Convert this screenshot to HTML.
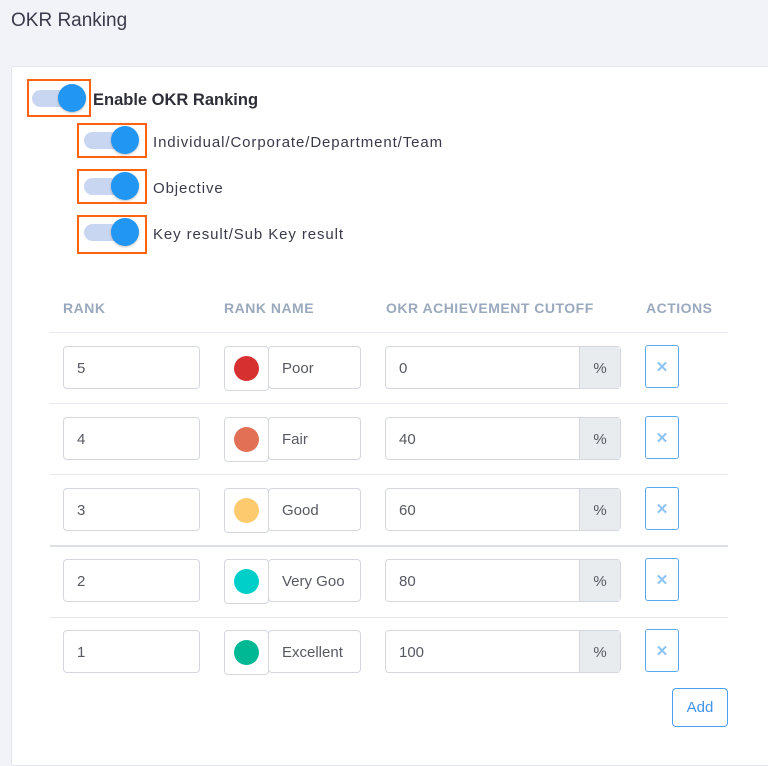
<!DOCTYPE html>
<html><head><meta charset="utf-8"><style>
*{box-sizing:border-box;margin:0;padding:0}
body{width:768px;height:744px;background:#f2f3f8;font-family:"Liberation Sans",sans-serif;position:relative;overflow:hidden;color:#3f4047}
.a{position:absolute}
.card{left:11px;top:66px;width:780px;height:700px;background:#fff;border:1px solid #e3e5ec;border-radius:3px}
.ob{border:2px solid #ff6310}
.track{position:absolute;height:17px;width:46px;border-radius:9px;background:#c9d6f1}
.knob{position:absolute;width:28px;height:28px;border-radius:50%;background:#2196f3;box-shadow:0 1px 2px rgba(0,0,0,.25)}
.lbl{font-size:15px;letter-spacing:.9px;color:#3a3a4a}
.th{font-size:14px;font-weight:bold;color:#9aa9bd;letter-spacing:.5px;top:300px}
.hr{left:50px;width:678px;height:1px;background:#e6e8ee}
.in{border:1px solid #d4d7de;border-radius:4px;background:#fff;height:43px;font-size:15px;color:#575962;padding-left:13px;line-height:43px}
.pct{background:#e9ecef;border-left:1px solid #d4d7de;position:absolute;right:0;top:0;width:41px;height:41px;text-align:center;color:#575962;line-height:43px}
.x{border:1px solid #5aa8f0;border-radius:3px;width:34px;height:43px;color:#8cc4f6;font-weight:bold;text-align:center;line-height:44px;font-size:15px}
.dot{position:absolute;left:9px;top:9px;width:25px;height:25px;border-radius:50%}
</style></head><body>
<div class="a" style="left:11px;top:10px;font-size:19px;color:#3a3a4a">OKR Ranking</div>
<div class="a card"></div>

<div class="a ob" style="left:27px;top:79px;width:64px;height:38px"></div>
<div class="track" style="left:32px;top:90px"></div><div class="knob" style="left:58px;top:84px"></div>
<div class="a" style="left:93px;top:91px;font-size:16.5px;font-weight:bold;color:#2e2e38">Enable OKR Ranking</div>

<div class="a ob" style="left:77px;top:123px;width:70px;height:35px"></div>
<div class="track" style="left:84px;top:132px"></div><div class="knob" style="left:111px;top:126px"></div>
<div class="a lbl" style="left:153px;top:134px">Individual/Corporate/Department/Team</div>

<div class="a ob" style="left:77px;top:169px;width:70px;height:35px"></div>
<div class="track" style="left:84px;top:178px"></div><div class="knob" style="left:111px;top:172px"></div>
<div class="a lbl" style="left:153px;top:180px">Objective</div>

<div class="a ob" style="left:77px;top:215px;width:70px;height:39px"></div>
<div class="track" style="left:84px;top:224px"></div><div class="knob" style="left:111px;top:218px"></div>
<div class="a lbl" style="left:153px;top:226px">Key result/Sub Key result</div>

<div class="a th" style="left:63px">RANK</div>
<div class="a th" style="left:224px">RANK NAME</div>
<div class="a th" style="left:386px">OKR ACHIEVEMENT CUTOFF</div>
<div class="a th" style="left:646px">ACTIONS</div>
<div class="a hr" style="top:332px"></div>
<div class="a hr" style="top:403px"></div>
<div class="a hr" style="top:474px"></div>
<div class="a hr" style="top:545px;height:2px;background:#dcdfe5"></div>
<div class="a hr" style="top:617px"></div>

<div class="a in" style="left:63px;top:346px;width:137px">5</div>
<div class="a in" style="left:224px;top:346px;width:45px;height:45px;padding:0"><div class="dot" style="background:#d63031"></div></div>
<div class="a in" style="left:268px;top:346px;width:93px">Poor</div>
<div class="a in" style="left:385px;top:346px;width:236px">0<div class="pct">%</div></div>
<div class="a x" style="left:645px;top:345px">✕</div>

<div class="a in" style="left:63px;top:417px;width:137px">4</div>
<div class="a in" style="left:224px;top:417px;width:45px;height:45px;padding:0"><div class="dot" style="background:#e17055"></div></div>
<div class="a in" style="left:268px;top:417px;width:93px">Fair</div>
<div class="a in" style="left:385px;top:417px;width:236px">40<div class="pct">%</div></div>
<div class="a x" style="left:645px;top:416px">✕</div>

<div class="a in" style="left:63px;top:488px;width:137px">3</div>
<div class="a in" style="left:224px;top:488px;width:45px;height:45px;padding:0"><div class="dot" style="background:#fdcb6e"></div></div>
<div class="a in" style="left:268px;top:488px;width:93px">Good</div>
<div class="a in" style="left:385px;top:488px;width:236px">60<div class="pct">%</div></div>
<div class="a x" style="left:645px;top:487px">✕</div>

<div class="a in" style="left:63px;top:559px;width:137px">2</div>
<div class="a in" style="left:224px;top:559px;width:45px;height:45px;padding:0"><div class="dot" style="background:#00cec9"></div></div>
<div class="a in" style="left:268px;top:559px;width:93px;overflow:hidden;white-space:nowrap">Very Goo</div>
<div class="a in" style="left:385px;top:559px;width:236px">80<div class="pct">%</div></div>
<div class="a x" style="left:645px;top:558px">✕</div>

<div class="a in" style="left:63px;top:630px;width:137px">1</div>
<div class="a in" style="left:224px;top:630px;width:45px;height:45px;padding:0"><div class="dot" style="background:#00b894"></div></div>
<div class="a in" style="left:268px;top:630px;width:93px;overflow:hidden;white-space:nowrap">Excellent</div>
<div class="a in" style="left:385px;top:630px;width:236px">100<div class="pct">%</div></div>
<div class="a x" style="left:645px;top:629px">✕</div>

<div class="a" style="left:672px;top:688px;width:56px;height:39px;border:1px solid #4aa0ee;border-radius:4px;color:#3f93e6;font-size:15px;text-align:center;line-height:38px">Add</div>
</body></html>
